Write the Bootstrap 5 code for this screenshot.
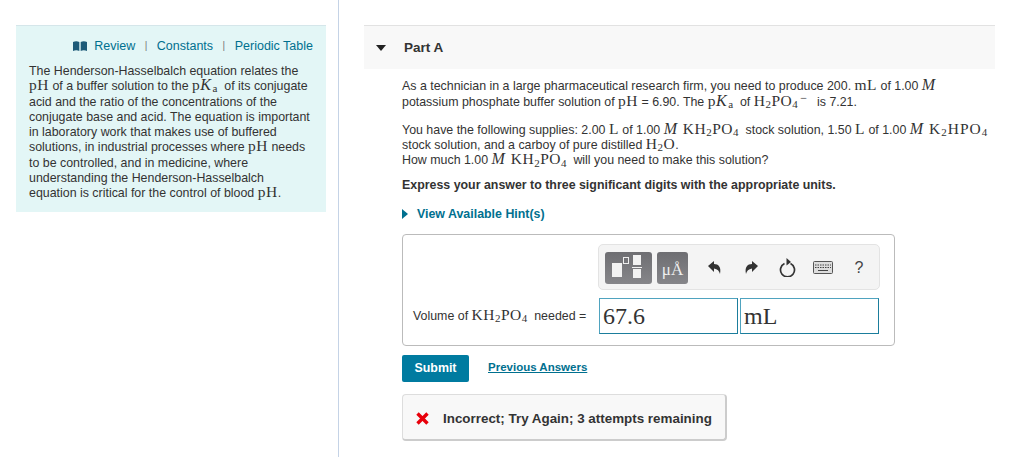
<!DOCTYPE html>
<html lang="en">
<head>
<meta charset="utf-8">
<title>Part A</title>
<link rel="stylesheet" href="https://cdn.jsdelivr.net/npm/bootstrap@5.3.0/dist/css/bootstrap.min.css">
<style>
html,body{height:457px;overflow:hidden;background:#fff}
body{font-family:"Liberation Sans",Arial,sans-serif;font-size:12.4px;line-height:15.1px;color:#333}
.side-col{width:339px;height:457px;border-right:1px solid #c5d3e6;padding:25px 12px 0 16px;flex:none}
.info-box{background:#e3f6f6;border-top:1px solid #d5e6ea;height:187px;padding:12px 13px;line-height:15.25px}
.res-links{color:#00708f;font-size:12.5px;line-height:16px;margin-bottom:10px;white-space:nowrap;gap:0}
.res-links .sep{color:#777;margin:0 9.500px;font-size:10px}
.book-ico{margin-right:7px}
.mth{font-family:"Liberation Serif",serif;font-size:15.5px;line-height:0;letter-spacing:.5px}
.mth i{font-size:16px;margin-right:1px}
.mth sub{font-size:11px;bottom:-.2em;line-height:0}
.mth .sub-end{margin-right:3px}
.mth .wide-set{letter-spacing:1px}
.mth sup{font-size:12px;line-height:0;margin:0 6px 0 2px;top:-.35em}
.main-col{padding:25px 29px 0 25px;flex:1;min-width:0}
.part-head{background:#f8f8f8;border-top:1px solid #e2e2e2;height:44px;font-weight:700;font-size:13.500px;color:#333;padding-left:12px;gap:18px}
.part-name{padding-top:1px}
.tri-d{width:0;height:0;border-left:5px solid transparent;border-right:5px solid transparent;border-top:6px solid #222}
.part-body{padding:10px 0 0 38px}
.para{margin:0 0 13px;white-space:nowrap}
.para-tail{margin-bottom:10px}
.line-low{display:block;margin-top:1px}
.lead-q{font-weight:700;margin:0 0 13px}
.hint-link{color:#00708f;font-weight:700;gap:9px;line-height:15px}
.tri-r{width:0;height:0;border-top:5px solid transparent;border-bottom:5px solid transparent;border-left:6px solid #00708f}
.ans-card{width:493px;height:112px;margin-top:12px;border:1px solid #bbb;border-radius:4px;padding:9px 10px 0 10px}
.tool-bar{width:282px;height:46px;margin-left:185px;background:#f4f4f4;border:1px solid #e3e3e3;border-radius:5px;padding:7px 0 0 6px;gap:5px}
.tool-btn{height:32px;border-radius:3px;background:linear-gradient(#6e6e72,#86868a);color:#eee}
.tool-wide{width:47px}
.tool-unit{width:31px;font-family:"Liberation Serif",serif;font-size:17px;line-height:36px;text-align:center}
.tool-icons{margin-left:4px;height:32px}
.tool-slot{width:36px;display:flex;justify-content:center;align-items:center}
.help-mark{font-size:16px;color:#444}
.ans-row{margin-top:8px;height:36px;white-space:nowrap}
.ans-row label{width:186px;padding-top:1px}
.ans-field{width:139px;height:36px;border:1px solid;border-color:#4fa3bf #1b7d9c #1b7d9c #4fa3bf;font-family:"Liberation Serif",serif;font-size:24px;line-height:34px;padding-left:3px;color:#333;margin-right:2px}
.sub-btn{background:#007ba0;color:#fff;font-weight:700;font-size:12.400px;width:67px;height:27px;line-height:27px;border-radius:2px;text-align:center;padding:0;border:0}
.sub-row{margin-top:9px;gap:19px}
.prev-link{color:#00708f;font-weight:700;font-size:11.500px;text-decoration:underline;margin-top:-2px}
.fb-box{width:325px;height:47px;margin-top:12px;background:#f8f8f8;border:1px solid #ddd;border-bottom:2px solid #ccc;border-right:2px solid #ccc;border-radius:4px;padding:3px 0 0 13px;gap:14px;font-weight:700;font-size:13.400px;color:#333}
</style>
</head>
<body>
<div class="d-flex">
  <aside class="side-col">
    <div class="info-box">
      <div class="res-links d-flex align-items-center justify-content-end">
        <svg width="14" height="10" viewBox="0 0 14 10" class="book-ico"><path fill="#1d5a78" d="M0 1c2-1 4.500-1 6.300 0v9C4.500 9 2 9 0 10zM7.700 1c1.800-1 4.300-1 6.300 0v9c-2-1-4.500-1-6.300 0z"/></svg>
        <span>Review</span><span class="sep">|</span><span>Constants</span><span class="sep">|</span><span>Periodic Table</span>
      </div>
      <div>The Henderson-Hasselbalch equation relates the<br>
      <span class="mth">pH</span> of a buffer solution to the <span class="mth">p<i>K</i><sub class="sub-end">a</sub></span> of its conjugate<br>
      acid and the ratio of the concentrations of the<br>
      conjugate base and acid. The equation is important<br>
      in laboratory work that makes use of buffered<br>
      solutions, in industrial processes where <span class="mth">pH</span> needs<br>
      to be controlled, and in medicine, where<br>
      understanding the Henderson-Hasselbalch<br>
      equation is critical for the control of blood <span class="mth">pH</span>.</div>
    </div>
  </aside>
  <main class="main-col">
    <div class="part-head d-flex align-items-center"><span class="tri-d"></span><span class="part-name">Part A</span></div>
    <div class="part-body">
      <p class="para">As a technician in a large pharmaceutical research firm, you need to produce 200. <span class="mth">mL</span> of 1.00 <span class="mth"><i>M</i></span>
      <span class="line-low">potassium phosphate buffer solution of <span class="mth">pH</span> = 6.90. The <span class="mth">p<i>K</i><sub class="sub-end">a</sub></span> of <span class="mth">H<sub>2</sub>PO<sub>4</sub><sup>&#8722;</sup></span> is 7.21.</span></p>
      <p class="para para-tail">You have the following supplies: 2.00 <span class="mth">L</span> of 1.00 <span class="mth"><i>M</i> KH<sub>2</sub>PO<sub class="sub-end">4</sub></span> stock solution, 1.50 <span class="mth">L</span> of 1.00 <span class="mth"><i>M</i> <span class="wide-set">K<sub>2</sub>HPO<sub>4</sub></span></span><br>
      stock solution, and a carboy of pure distilled <span class="mth">H<sub>2</sub>O</span>.<br>
      How much 1.00 <span class="mth"><i>M</i> KH<sub>2</sub>PO<sub class="sub-end">4</sub></span> will you need to make this solution?</p>
      <p class="lead-q">Express your answer to three significant digits with the appropriate units.</p>
      <div class="hint-link d-flex align-items-center"><span class="tri-r"></span><span>View Available Hint(s)</span></div>
      <div class="ans-card">
        <div class="tool-bar d-flex">
          <div class="tool-btn tool-wide">
            <svg width="47" height="32" viewBox="0 0 47 32"><g fill="#f2f2f2"><rect x="7" y="11" width="10" height="14"/><rect x="28" y="3" width="8" height="10"/><rect x="28" y="17" width="8" height="9"/><rect x="27" y="15" width="10" height="1"/></g><rect x="18.500" y="5.500" width="5" height="6" fill="none" stroke="#eee"/></svg>
          </div>
          <div class="tool-btn tool-unit">μÅ</div>
          <div class="tool-icons d-flex align-items-center">
            <span class="tool-slot"><svg width="16" height="16" viewBox="0 0 16 16"><path fill="#333" d="M1 6l6-5v3c4.500 0 7.500 3 6 10-.7-3-2.500-5-6-5.500V12z"/></svg></span>
            <span class="tool-slot"><svg width="16" height="16" viewBox="0 0 16 16"><path fill="#333" d="M15 6L9 1v3C4.500 4 1.500 7 3 14c.7-3 2.500-5 6-5.500V12z"/></svg></span>
            <span class="tool-slot"><svg width="17" height="19" viewBox="0 0 17 19"><path fill="none" stroke="#333" stroke-width="1.700" d="M5.500 5.500a7 7 0 1 0 6 0"/><path fill="#333" d="M7.500 0l4.500 4-4.500 3.500z"/></svg></span>
            <span class="tool-slot"><svg width="20" height="13" viewBox="0 0 20 13"><rect x=".5" y=".5" width="19" height="12" rx="1" fill="#ddd" stroke="#555"/><path stroke="#444" stroke-dasharray="1.500 1" d="M2 4h16M2 6.500h16"/><path stroke="#444" d="M5 9.500h10"/></svg></span>
            <span class="tool-slot help-mark">?</span>
          </div>
        </div>
        <div class="ans-row d-flex align-items-center">
          <label>Volume of <span class="mth">KH<sub>2</sub>PO<sub class="sub-end">4</sub></span> needed =</label>
          <div class="ans-field">67.6</div>
          <div class="ans-field">mL</div>
        </div>
      </div>
      <div class="sub-row d-flex align-items-center">
        <button class="btn sub-btn" type="button">Submit</button>
        <a class="prev-link" href="#">Previous Answers</a>
      </div>
      <div class="fb-box d-flex align-items-center">
        <svg width="13" height="13" viewBox="0 0 13 13"><path stroke="#e8000b" stroke-width="3.400" d="M1.500 1.500l10 10M11.500 1.500l-10 10"/></svg>
        <span>Incorrect; Try Again; 3 attempts remaining</span>
      </div>
    </div>
  </main>
</div>
<script src="https://cdn.jsdelivr.net/npm/bootstrap@5.3.0/dist/js/bootstrap.bundle.min.js"></script>
</body>
</html>
